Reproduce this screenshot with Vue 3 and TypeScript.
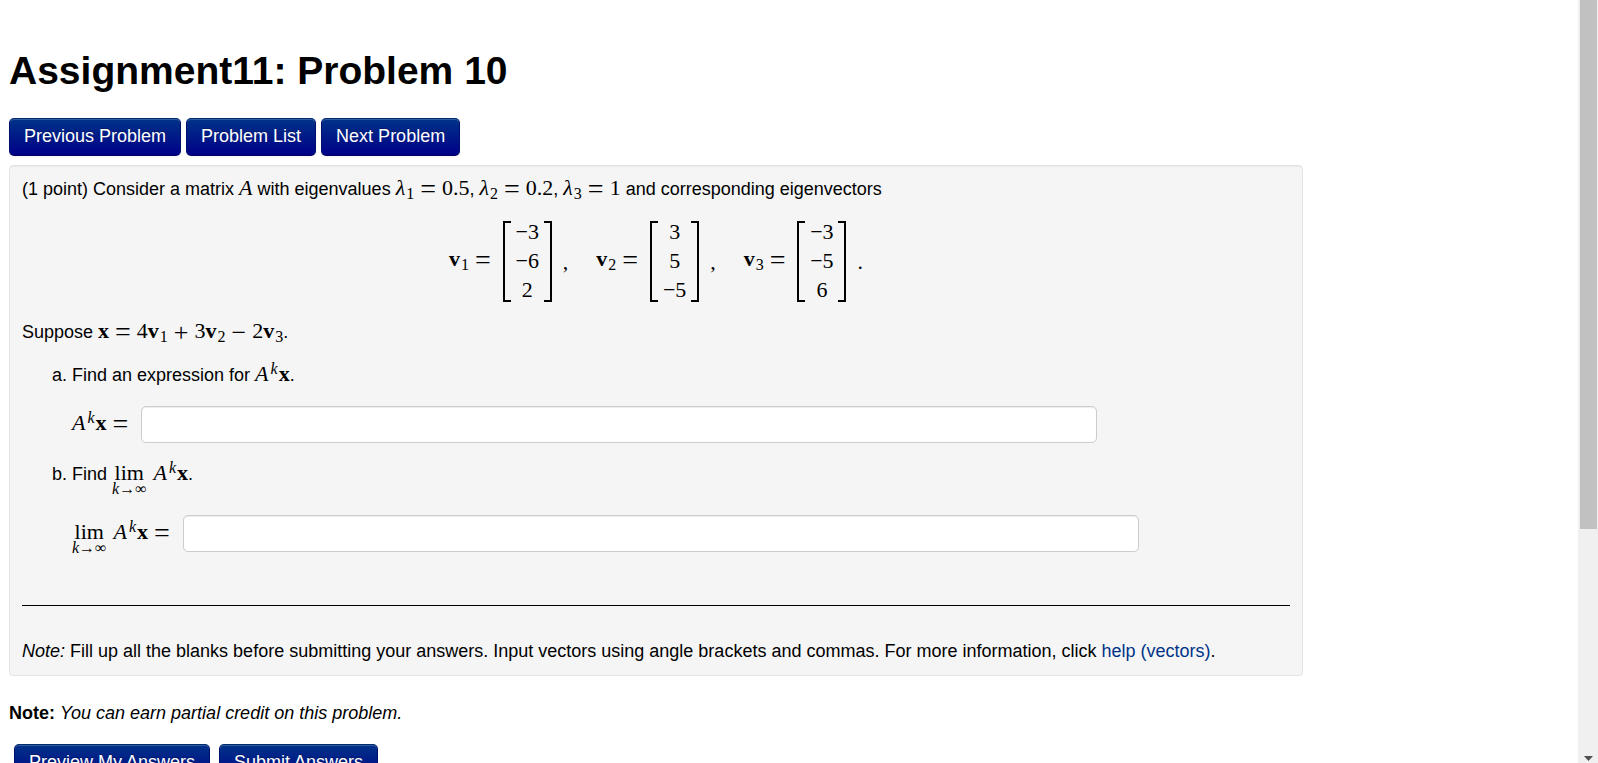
<script setup lang="ts">
import { ref } from 'vue'

interface Vector {
  index: number
  entries: string[]
  end: string
}

const navigation: string[] = ['Previous Problem', 'Problem List', 'Next Problem']
const actions: string[] = ['Preview My Answers', 'Submit Answers']

const vectors: Vector[] = [
  { index: 1, entries: ['−3', '−6', '2'], end: ',' },
  { index: 2, entries: ['3', '5', '−5'], end: ',' },
  { index: 3, entries: ['−3', '−5', '6'], end: '.' },
]

const power = ref('')
const limit = ref('')
</script>

<template>
  <div class="page">
    <main class="content">
      <h1>Assignment11: Problem 10</h1>
      <nav class="buttons">
        <button v-for="label in navigation" :key="label" type="button" class="btn">{{ label }}</button>
      </nav>

      <section class="problem">
        <p class="line">
          (1 point) Consider a matrix <span class="math"><i>A</i></span> with eigenvalues
          <span class="math"><i>λ</i><sub>1</sub><span class="rel">=</span>0.5</span>,
          <span class="math"><i>λ</i><sub>2</sub><span class="rel">=</span>0.2</span>,
          <span class="math"><i>λ</i><sub>3</sub><span class="rel">=</span>1</span>
          and corresponding eigenvectors
        </p>

        <div class="vectors">
          <div v-for="v in vectors" :key="v.index" class="vector">
            <span class="math"><b>v</b><sub>{{ v.index }}</sub><span class="rel">=</span></span>
            <span class="matrix">
              <span v-for="(entry, i) in v.entries" :key="i" class="math">{{ entry }}</span>
            </span>
            <span class="math end">{{ v.end }}</span>
          </div>
        </div>

        <p class="line">
          Suppose <span class="math"><b>x</b><span class="rel">=</span>4<b>v</b><sub>1</sub><span class="op">+</span>3<b>v</b><sub>2</sub><span class="op">−</span>2<b>v</b><sub>3</sub></span>.
        </p>

        <ol class="parts">
          <li>
            Find an expression for <span class="math"><i>A</i><sup>k</sup><b>x</b></span>.
            <div class="answer">
              <label for="answer-power" class="math"><i>A</i><sup>k</sup><b>x</b><span class="rel last">=</span></label>
              <input id="answer-power" v-model="power" type="text" />
            </div>
          </li>
          <li>
            Find
            <span class="math"><span class="lim"><span>lim</span><span class="under"><i>k</i>→∞</span></span><i>A</i><sup>k</sup><b>x</b></span>.
            <div class="answer">
              <label for="answer-limit" class="math"><span class="lim"><span>lim</span><span class="under"><i>k</i>→∞</span></span><i>A</i><sup>k</sup><b>x</b><span class="rel last">=</span></label>
              <input id="answer-limit" v-model="limit" type="text" />
            </div>
          </li>
        </ol>

        <hr />
        <p class="line">
          <em>Note:</em> Fill up all the blanks before submitting your answers. Input vectors using angle brackets and commas. For more information, click <a href="#">help (vectors)</a>.
        </p>
      </section>

      <p class="line credit"><strong>Note:</strong> <em>You can earn partial credit on this problem.</em></p>
      <div class="buttons actions">
        <button v-for="label in actions" :key="label" type="button" class="btn">{{ label }}</button>
      </div>
    </main>

    <div class="scrollbar" aria-hidden="true">
      <div class="thumb"></div>
      <svg width="9" height="5" viewBox="0 0 9 5"><path d="M0 0H9L4.5 5Z" fill="#505050" /></svg>
    </div>
  </div>
</template>

<style>
body {
  margin: 0;
  background: #fff;
}
</style>

<style scoped>
.page {
  display: flex;
  height: 100vh;
  overflow: hidden;
  color: #000;
  font: 18px/22px "Liberation Sans", Arial, sans-serif;
}

.content {
  flex: 1;
  min-width: 0;
  padding: 48px 10px 0 9px;
}

h1 {
  margin: 0 0 24px;
  font-size: 39px;
  line-height: 46px;
}

.buttons {
  display: flex;
  gap: 5px;
}

.btn {
  height: 38px;
  padding: 0 14px 2px;
  border: 1px solid #002a6e;
  border-color: #002a6e #00106e #00005e;
  border-radius: 5px;
  background: linear-gradient(#003388, #000088);
  box-shadow: inset 0 1px 0 rgba(255, 255, 255, 0.2), 0 1px 2px rgba(0, 0, 0, 0.05);
  color: #fff;
  font: inherit;
  text-shadow: 0 -1px 0 rgba(0, 0, 0, 0.25);
  white-space: nowrap;
}

.problem {
  box-sizing: border-box;
  width: 83%;
  margin-top: 9px;
  padding: 12px 12px 13px;
  border: 1px solid #e3e3e3;
  border-radius: 4px;
  background: #f5f5f5;
  box-shadow: inset 0 1px 1px rgba(0, 0, 0, 0.05);
}

.line {
  margin: 0;
}

.math {
  font-family: "Liberation Serif", "Times New Roman", serif;
  font-size: 22px;
  line-height: 0;
  white-space: nowrap;
}

sub,
sup {
  font-size: 16px;
  line-height: 0;
}

sub {
  vertical-align: -4px;
  margin-left: 1px;
}

sup {
  vertical-align: 7px;
  margin: 0 1px 0 2px;
  font-style: italic;
}

.rel,
.op {
  line-height: 0;
  vertical-align: -3px;
}

.rel {
  margin: 0 6px;
  font-size: 28px;
}

.last {
  margin-right: 0;
}

.op {
  margin: 0 6px;
  font-size: 26px;
}

.vectors {
  display: flex;
  justify-content: center;
  gap: 28px;
  margin: 21px 0 19px;
}

.vector {
  display: flex;
  align-items: center;
}

.matrix {
  display: grid;
  grid-template-rows: repeat(3, 29px);
  align-content: center;
  justify-items: center;
  align-items: center;
  box-sizing: border-box;
  width: 49px;
  height: 81px;
  margin-left: 6px;
  padding-bottom: 2px;
  background:
    linear-gradient(#000, #000) left top / 8px 2px,
    linear-gradient(#000, #000) left bottom / 8px 2px,
    linear-gradient(#000, #000) right top / 8px 2px,
    linear-gradient(#000, #000) right bottom / 8px 2px,
    linear-gradient(#000, #000) left / 2px 100%,
    linear-gradient(#000, #000) right / 2px 100%;
  background-repeat: no-repeat;
}

.end {
  margin-left: 11px;
}

.parts {
  margin: 21px 0 0;
  padding-left: 50px;
  list-style: lower-alpha;
}

.answer {
  display: flex;
  align-items: baseline;
  gap: 13px;
  margin: 20px 0;
}

.answer input {
  box-sizing: border-box;
  width: 78.5%;
  height: 37px;
  padding: 4px 6px;
  border: 1px solid #ccc;
  border-radius: 5px;
  background: #fff;
  box-shadow: inset 0 1px 1px rgba(0, 0, 0, 0.075);
  font: inherit;
}

.lim {
  display: inline-flex;
  flex-direction: column;
  align-items: center;
  margin-right: 7px;
  line-height: 20px;
}

.under {
  font-size: 16px;
  line-height: 12px;
}

hr {
  margin: 51px 0 34px;
  border: 0;
  border-top: 1px solid #000;
}

a {
  color: #003388;
  text-decoration: none;
}

.credit {
  margin-top: 26px;
}

.actions {
  gap: 9px;
  margin: 20px 0 0 5px;
}

.scrollbar {
  display: flex;
  flex-direction: column;
  justify-content: space-between;
  align-items: center;
  box-sizing: border-box;
  width: 20px;
  padding: 0 1px 2px 2px;
  background: #f0f0f0;
}

.thumb {
  width: 100%;
  height: 69.5%;
  background: #c1c1c1;
}
</style>
